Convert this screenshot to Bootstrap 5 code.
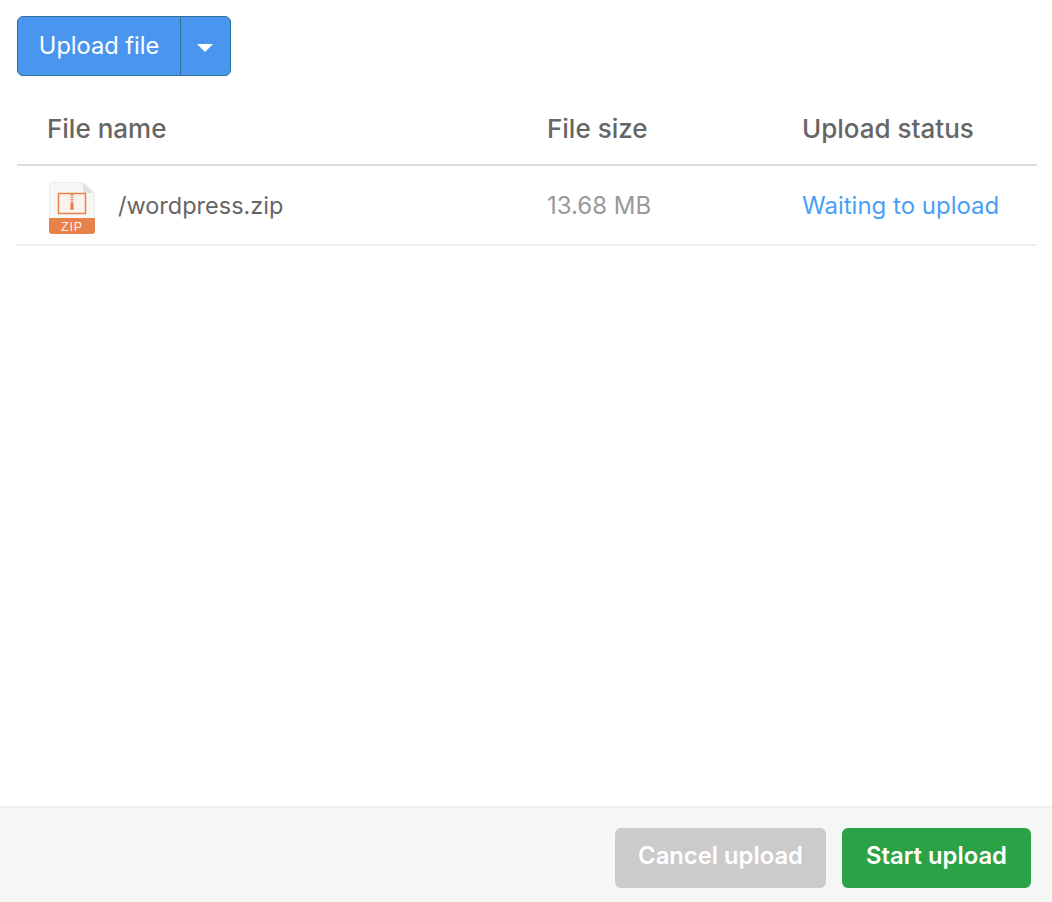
<!DOCTYPE html>
<html lang="en">
<head>
<meta charset="utf-8">
<title>Upload</title>
<link href="https://cdn.jsdelivr.net/npm/bootstrap@5.3.0/dist/css/bootstrap.min.css" rel="stylesheet">
<style>
html,body{height:100%;}
body{font-family:Inter,"Liberation Sans",sans-serif;color:#666;background:#fff;overflow:hidden;}
.shell{height:902px;}
.upper{padding:16px 15px 0 17px;}
.up-group .btn{background:#4a96ee;border-color:#2f7099;color:#fff;font-size:23.6px;line-height:30px;height:60px;--bs-btn-border-radius:6px;}
.up-main{width:164px;padding:0;}
.up-caret{width:51px;padding:0 2px 0 0;margin-left:-1px;}
.up-caret svg{display:block;margin:3px auto 0;}
.files{width:1020px;margin-top:16px;table-layout:fixed;}
.files th{font-size:26px;font-weight:500;color:#666;padding:2px 0 0 30px;height:73px;line-height:30px;vertical-align:middle;border-bottom:2px solid #ddd;}
.files td{font-size:23.5px;height:80px;padding:2px 0 0 30px;vertical-align:middle;border-bottom:2px solid #eee;color:#666;}
.file-ico{margin:4px 0 0 2px;}
.name-text{margin-left:23px;}
.sz{color:#999!important;font-size:24px!important;}
.wait{color:#4a9ff5!important;font-size:24px!important;}
.foot{height:96px;background:#f5f6f6;border-top:2px solid #eee;padding:20px 21px 0 0;}
.foot .btn{height:60px;font-size:23.8px;font-weight:600;border:0;color:#fff;padding:0 0 4px;--bs-btn-border-radius:6px;opacity:1;}
.b-cancel{width:211px;background:#cbcbcb!important;}
.b-start{width:189px;background:#2ba245!important;}
.c1{width:500px}.c2{width:255px}
</style>
</head>
<body>
<div class="shell d-flex flex-column">
  <div class="upper flex-grow-1">
    <div class="btn-group up-group">
      <button type="button" class="btn up-main">Upload file</button>
      <button type="button" class="btn up-caret" aria-label="More"><svg width="16" height="8" viewBox="0 0 16 8"><path d="M0 0h16L8 8z" fill="#fff"/></svg></button>
    </div>
    <table class="files">
      <thead><tr><th class="c1">File name</th><th class="c2">File size</th><th>Upload status</th></tr></thead>
      <tbody><tr>
        <td><div class="d-flex align-items-center">
          <svg class="file-ico" width="46" height="52" viewBox="0 0 46 52"><path d="M3 .5H34L45.500 11V49a2.500 2.500 0 0 1-2.500 2.500H3A2.500 2.500 0 0 1 .5 49V3A2.500 2.500 0 0 1 3 .5z" fill="#f7f7f5" stroke="#e4e4e2" stroke-dasharray="1.500 1"/><path d="M34 .5V11H45.500z" fill="#e2e2e0"/><path d="M0 36H46V49a3 3 0 0 1-3 3H3a3 3 0 0 1-3-3z" fill="#e8814a"/><rect x="9.500" y="11.500" width="27" height="20" fill="#fbf3ed" stroke="#e8814a" stroke-width="1.500"/><path d="M23 12v9" stroke="#e8814a" stroke-width="2.500" stroke-dasharray="1.500 1"/><rect x="21.500" y="21" width="3" height="7" fill="#e8814a"/><text x="23" y="49" font-size="12.500" letter-spacing=".8" text-anchor="middle" fill="#fff" fill-opacity=".9" font-family="Liberation Sans">ZIP</text></svg>
          <span class="name-text">/wordpress.zip</span></div></td>
        <td class="sz">13.68 MB</td>
        <td class="wait">Waiting to upload</td>
      </tr></tbody>
    </table>
  </div>
  <div class="foot d-flex justify-content-end gap-3">
    <button type="button" class="btn b-cancel">Cancel upload</button>
    <button type="button" class="btn b-start">Start upload</button>
  </div>
</div>
<script src="https://cdn.jsdelivr.net/npm/bootstrap@5.3.0/dist/js/bootstrap.bundle.min.js"></script>
</body>
</html>
